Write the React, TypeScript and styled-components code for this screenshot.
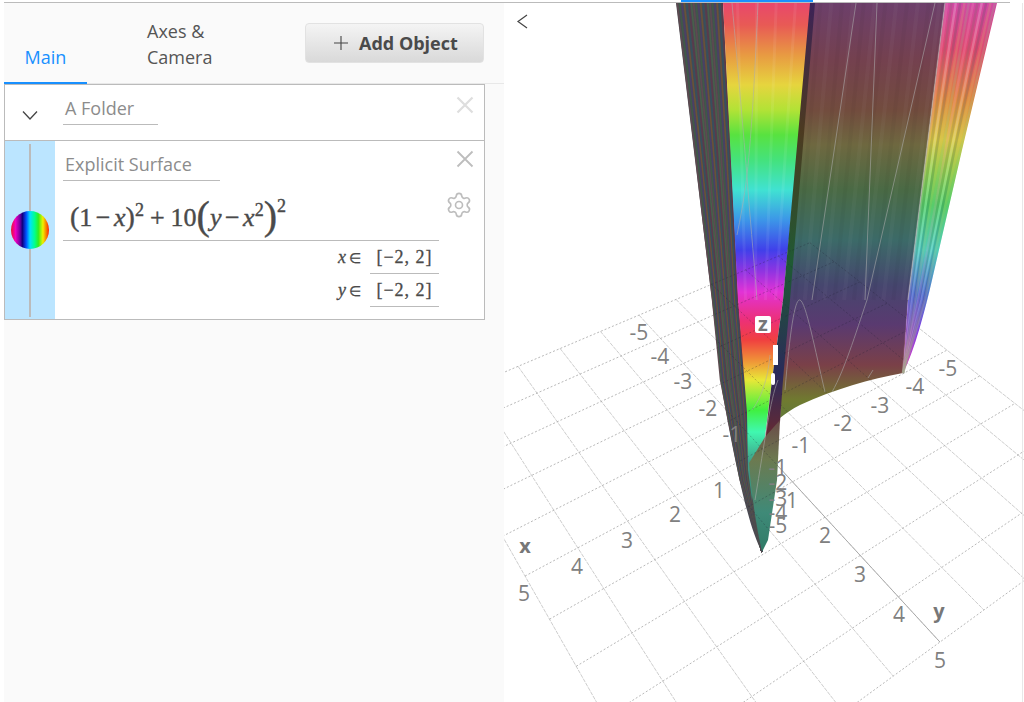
import React from 'react';
import styled, { createGlobalStyle } from 'styled-components';
import { Settings } from 'lucide-react';

const GlobalStyle = createGlobalStyle`
	html, body {
		margin: 0;
		padding: 0;
		background: #fff;
	}
	body {
		font-family: 'Open Sans', 'Noto Sans', sans-serif;
		overflow: hidden;
	}
`;

// rainbow of the height map, y is in page pixels
const bright: [number, string][] = [
	[0, '#e8456f'], [25, '#e85a55'], [55, '#e89a42'], [85, '#e6d53e'], [110, '#b2e236'], [135, '#58e240'],
	[160, '#44e27c'], [190, '#40e2d2'], [220, '#3c96e8'], [250, '#4040ea'], [270, '#8a34e2'], [292, '#e232d6'],
	[320, '#ec3078'], [340, '#f04040'], [360, '#f09038'], [380, '#e8e838'], [410, '#40f040'], [432, '#40f8b0'],
	[462, '#3f9c88'], [552, '#2f7a60'],
];
const dark: [number, string][] = [
	[0, '#6c3f6c'], [60, '#74414f'], [110, '#724c3e'], [145, '#6e6840'], [190, '#4a6a45'], [240, '#3c6a68'],
	[285, '#46466e'], [325, '#5a3a70'], [365, '#7a4048'], [400, '#707a30'], [430, '#5a7a40'],
];
const flank: [number, string][] = [
	[0, '#d048a8'], [50, '#e04a70'], [100, '#e08a40'], [140, '#d8c840'], [170, '#90d048'], [205, '#48d060'],
	[250, '#40d0c0'], [295, '#4060e0'], [335, '#8a3ae0'], [372, '#e838c0'],
];

const Stops = ({ list }: { list: [number, string][] }) => (
	<>
		{list.map(([y, c]) => (
			<stop key={y} offset={y / 560} stopColor={c} />
		))}
	</>
);

// plane z=0 as seen by the camera
const project = (x: number, y: number): [number, number] => {
	const d = 1 - 0.02493 * x - 0.03614 * y;
	return [(-60.54 * x + 1.56 * y + 762.3) / d, (11.05 * x + 15.4 * y + 449) / d];
};

const segment = (x1: number, y1: number, x2: number, y2: number) => {
	const [a, b] = project(x1, y1);
	const [c, e] = project(x2, y2);
	return `M${a.toFixed(1)} ${b.toFixed(1)}L${c.toFixed(1)} ${e.toFixed(1)}`;
};

const units = [-5, -4, -3, -2, -1, 0, 1, 2, 3, 4, 5];
const acrossPath = units.map((y) => segment(5, y, -5, y)).join('');
const alongPath = units.map((x) => segment(x, -5, x, 5)).join('');

const stripes = (left: [number, number][], right: [number, number][], n: number) =>
	Array.from({ length: n }, (_, i) => {
		const u = (i + 0.5) / n;
		return left.map(([x, y], k) => `${(x + (right[k][0] - x) * u).toFixed(1)},${y}`).join(' ');
	});

const sliverLeft: [number, number][] = [[676, 3], [694, 150], [712, 300], [720, 380], [740, 480], [762, 552]];
const sliverRight: [number, number][] = [[723, 3], [731, 150], [738, 300], [745, 380], [752, 480], [762, 552]];
const centerLeft: [number, number][] = [[723, 3], [738, 300]];
const centerRight: [number, number][] = [[810, 3], [783, 300]];
const panelLeft: [number, number][] = [[815, 3], [790, 300]];
const panelRight: [number, number][] = [[945, 3], [908, 300]];
const sideLeft: [number, number][] = [[945, 3], [926, 150], [908, 300], [903, 373]];
const sideRight: [number, number][] = [[997, 3], [962, 150], [927, 300], [903, 373]];
const sliverColors = ['#5e4a50', '#3f5a48', '#4a4068', '#6a5238', '#36505e', '#5a3a4c', '#48604a'];
const sideColors = ['#f6a0c0', '#6a6a60', '#ffffff', '#405060', '#d8c070', '#90c090'];

const SLIVER = 'M676 3L723 3L738 300L747 413L750 463L762 552C750 530 738 480 722 390L712 300Z';
const CENTER = 'M723 3L812 3L783 300L772 380L765 437L752 500L748 470L747 413L738 300Z';
const TIP = 'M749 463L765 437L780 420L777 480L768 540L762 552C757 530 752 500 749 463Z';
const PANEL = 'M813 3L945 3L908 300L903 373C870 379 835 389 800 405C792 409 786 413 780 418L785 300Z';
const SIDE = 'M945 3L997 3L962 150L932 280C925 310 915 350 903 373L908 300Z';
const SPINE = 'M810 3L815 3L790 300L783 380L780 422L765 440L772 380L783 300Z';

const SurfaceDrawing = () => (
	<g>
		<path d={SLIVER} fill="#4a4a52" />
		{stripes(sliverLeft, sliverRight, 20).map((p, i) => (
			<polyline key={i} points={p} fill="none" stroke={sliverColors[i % 7]} strokeWidth={1.6} />
		))}
		<path d={CENTER} fill="url(#brightRamp)" />
		{stripes(centerLeft, centerRight, 9).map((p, i) => (
			<polyline key={i} points={p} fill="none" stroke="#fff" strokeWidth={3} opacity={i % 2 ? 0.07 : 0} />
		))}
		<path d={PANEL} fill="url(#darkRamp)" />
		{stripes(panelLeft, panelRight, 12).map((p, i) => (
			<polyline key={i} points={p} fill="none" stroke={i % 2 ? '#fff' : '#000'} strokeWidth={4} opacity={0.03} />
		))}
		<path d={SIDE} fill="url(#flankRamp)" />
		{stripes(sideLeft, sideRight, 12).map((p, i) => (
			<polyline key={i} points={p} fill="none" stroke={sideColors[i % 6]} strokeWidth={2.5} opacity={0.22} />
		))}
		<path d={SPINE} fill="url(#spineRamp)" />
		<path d={TIP} fill="url(#tipRamp)" />
		<g clipPath="url(#surfaceClip)">
			<path d={alongPath + acrossPath} fill="none" stroke="#223" strokeWidth={0.7} strokeDasharray="2 2" opacity={0.4} />
		</g>
		<g fill="none" stroke="#b0b0b0" strokeWidth={1} opacity={0.55}>
			<path d="M732 3C738 70 745 150 748 190C751 230 755 270 757 300" />
			<path d="M758 3C755 70 752 130 747 175C744 200 740 220 737 235" />
			<path d="M856 3L812 300" />
			<path d="M877 3L865 300" />
			<path d="M935 3L867 300" />
			<path d="M945 3L908 300" strokeWidth={1.5} />
			<path d="M785 390C790 330 795 298 800 300C806 302 815 350 825 392" />
			<path d="M832 392C845 370 860 320 867 300" />
			<path d="M868 378L873 370" />
			<path d="M752 410C760 400 768 380 770 355" />
			<path d="M755 500C765 440 770 400 778 380" />
		</g>
	</g>
);

const axisTicks: [string, number, number][] = [
	['5', 524, 593], ['4', 577, 566], ['3', 627, 540], ['2', 675, 514], ['1', 719, 490],
	['-1', 801, 445], ['-2', 843, 423], ['-3', 880, 405], ['-4', 915, 386], ['-5', 948, 368],
	['-5', 639, 332], ['-4', 660, 356], ['-3', 683, 381], ['-2', 708, 408], ['-1', 732, 434],
	['1', 792, 500], ['2', 825, 535], ['3', 860, 574], ['4', 899, 614], ['5', 940, 660],
	['-1', 778, 467], ['-2', 778, 482], ['-3', 778, 498], ['-4', 778, 512], ['-5', 778, 525],
];

const Scene = () => (
	<Viewport viewBox="504 0 520 702">
		<defs>
			<linearGradient id="brightRamp" gradientUnits="userSpaceOnUse" x1="0" y1="0" x2="0" y2="560">
				<Stops list={bright} />
			</linearGradient>
			<linearGradient id="darkRamp" gradientUnits="userSpaceOnUse" x1="0" y1="0" x2="0" y2="560">
				<Stops list={dark} />
			</linearGradient>
			<linearGradient id="flankRamp" gradientUnits="userSpaceOnUse" x1="0" y1="0" x2="0" y2="560">
				<Stops list={flank} />
			</linearGradient>
			<linearGradient id="tipRamp" gradientUnits="userSpaceOnUse" x1="0" y1="420" x2="0" y2="552">
				<stop offset={0} stopColor="#6a4a48" />
				<stop offset={0.3} stopColor="#6c7a50" />
				<stop offset={0.7} stopColor="#3f8a78" />
				<stop offset={1} stopColor="#2f7a66" />
			</linearGradient>
			<linearGradient id="spineRamp" gradientUnits="userSpaceOnUse" x1="0" y1="0" x2="0" y2="440">
				<stop offset={0} stopColor="#3c2258" />
				<stop offset={0.3} stopColor="#4c3a20" />
				<stop offset={0.6} stopColor="#1f5a34" />
				<stop offset={0.85} stopColor="#2a2a5a" />
				<stop offset={1} stopColor="#6a2a30" />
			</linearGradient>
			<clipPath id="surfaceClip">
				<path d={SLIVER} />
				<path d={CENTER} />
				<path d={TIP} />
				<path d={PANEL} />
			</clipPath>
		</defs>

		<path d={alongPath} fill="none" stroke="#c0c0c0" strokeWidth={0.8} strokeDasharray="4 1" />
		<path d={acrossPath} fill="none" stroke="#a6a6a6" strokeWidth={0.8} strokeDasharray="2 2" />
		<path d={segment(0, 0, 0, 5)} fill="none" stroke="#a0a0a0" strokeWidth={0.8} />

		<SurfaceDrawing />

		{axisTicks.map(([t, x, y], i) => (
			<TickLabel key={i} x={x} y={y} textAnchor="middle" dominantBaseline="central">
				{t}
			</TickLabel>
		))}
		<AxisName x={525} y={545} textAnchor="middle" dominantBaseline="central">x</AxisName>
		<AxisName x={939} y={610} textAnchor="middle" dominantBaseline="central">y</AxisName>

		<rect x={755} y={316} width={16} height={17} rx={2} fill="#fff" />
		<AxisName x={763} y={323} textAnchor="middle" dominantBaseline="central">z</AxisName>
		<rect x={773} y={345} width={5} height={20} fill="#fff" />
		<rect x={771} y={373} width={4} height={12} rx={2} fill="#fff" />

		<path d="M527 15L518 21.5L527 28" fill="none" stroke="#444" strokeWidth={1.2} />
		<rect x={504} y={2} width={506} height={1} fill="#bbb" />
		<rect x={681} y={0} width={132} height={2} fill="#1890ff" />
		<rect x={1022} y={3} width={1} height={699} fill="#e8e8e8" />
	</Viewport>
);

const Cross = ({ shade, weight }: { shade: string; weight: number }) => (
	<svg width="18" height="18" viewBox="0 0 18 18">
		<path d="M1.5 1.5L16.5 16.5M16.5 1.5L1.5 16.5" stroke={shade} strokeWidth={weight} fill="none" />
	</svg>
);

const Chevron = () => (
	<svg width="16" height="10" viewBox="0 0 16 10">
		<path d="M1 1.5L8 9L15 1.5" stroke="#444" strokeWidth={1.3} fill="none" />
	</svg>
);

const Plus = () => (
	<svg width="14" height="14" viewBox="0 0 14 14">
		<path d="M7 0V14M0 7H14" stroke="#444" strokeWidth={1.1} fill="none" />
	</svg>
);

const App = () => (
	<Page>
		<GlobalStyle />
		<Panel>
			<TabBar>
				<Tab $active>Main</Tab>
				<Tab $narrow>Axes &amp; Camera</Tab>
				<AddButton>
					<Plus />
					<span>Add Object</span>
				</AddButton>
			</TabBar>
			<Card>
				<FolderToggle>
					<Chevron />
				</FolderToggle>
				<Content>
					<NameField $width={95}>A Folder</NameField>
				</Content>
				<Aside>
					<CloseSlot $top={11}>
						<Cross shade="#dedede" weight={2.2} />
					</CloseSlot>
				</Aside>
			</Card>
			<Card>
				<ColorBand>
					<Swatch />
				</ColorBand>
				<Content $padded>
					<NameField $width={157}>Explicit Surface</NameField>
					<MathField>
						<MathLine>
							<Paren>(</Paren>1<Op>−</Op><i>x</i><Paren>)</Paren><Sup>2</Sup><Op $wide>+</Op>10
							<BigParen>(</BigParen><i>y</i><Op>−</Op><i>x</i><Sup>2</Sup><BigParen>)</BigParen><Sup $high>2</Sup>
						</MathLine>
					</MathField>
					<RangeRow>
						<RangeLabel><i>x</i><Member>∈</Member></RangeLabel>
						<RangeValue>[−2, 2]</RangeValue>
					</RangeRow>
					<RangeRow>
						<RangeLabel><i>y</i><Member>∈</Member></RangeLabel>
						<RangeValue>[−2, 2]</RangeValue>
					</RangeRow>
				</Content>
				<Aside>
					<CloseSlot $top={9}>
						<Cross shade="#bdbdbd" weight={1.8} />
					</CloseSlot>
					<GearSlot>
						<Settings size={28} strokeWidth={1.4} color="#bdbdbd" />
					</GearSlot>
				</Aside>
			</Card>
		</Panel>
		<Scene />
	</Page>
);

export default App;

const Page = styled.div`
	display: flex;
	width: 1024px;
	height: 702px;
	overflow: hidden;
	background: #fff;
`;

const Panel = styled.div`
	flex: none;
	box-sizing: border-box;
	width: 500px;
	height: 700px;
	margin: 2px 0 0 4px;
	border-top: 1px solid #bbb;
	background: #fafafa;
`;

const TabBar = styled.div`
	display: flex;
	align-items: flex-end;
	height: 81px;
	border-bottom: 1px solid #e8e8e8;
	box-sizing: border-box;
`;

const Tab = styled.div<{ $active?: boolean; $narrow?: boolean }>`
	box-sizing: border-box;
	width: ${(p) => (p.$narrow ? '80px' : '83px')};
	margin-left: ${(p) => (p.$narrow ? '60px' : '0')};
	margin-bottom: -1px;
	padding-bottom: 12px;
	font-size: 18px;
	line-height: 26px;
	text-align: ${(p) => (p.$narrow ? 'left' : 'center')};
	color: ${(p) => (p.$active ? '#1890ff' : '#555')};
	border-bottom: 2px solid ${(p) => (p.$active ? '#1890ff' : 'transparent')};
`;

const AddButton = styled.div`
	display: flex;
	align-items: center;
	gap: 11px;
	box-sizing: border-box;
	width: 179px;
	height: 40px;
	margin: 0 20px 20px auto;
	padding-left: 28px;
	border: 1px solid #e2e2e2;
	border-radius: 4px;
	background: linear-gradient(#f4f4f4, #d9d9d9);
	font-size: 18px;
	font-weight: 700;
	color: #4a4a4a;
	white-space: nowrap;
`;

const Card = styled.div`
	position: relative;
	display: flex;
	box-sizing: border-box;
	width: 481px;
	margin-bottom: -1px;
	border: 1px solid #bbb;
	background: #fff;
`;

const FolderToggle = styled.div`
	display: flex;
	align-items: center;
	justify-content: center;
	flex: none;
	width: 50px;
	height: 55px;
	padding-top: 5px;
	box-sizing: border-box;
`;

const ColorBand = styled.div`
	position: relative;
	display: flex;
	align-items: center;
	justify-content: center;
	flex: none;
	width: 50px;
	background: #bbe5ff;
	&::before {
		content: '';
		position: absolute;
		top: 3px;
		bottom: 2px;
		left: 24px;
		width: 2px;
		background: #bbb;
	}
`;

const Swatch = styled.div`
	position: relative;
	width: 38px;
	height: 38px;
	border-radius: 50%;
	background: linear-gradient(
		90deg,
		#f01030 0%,
		#f000c0 12%,
		#7000a0 24%,
		#100080 30%,
		#0050ff 40%,
		#00e0ff 50%,
		#00ff90 62%,
		#30f020 72%,
		#f0f000 84%,
		#ff2000 100%
	);
`;

const Content = styled.div<{ $padded?: boolean }>`
	display: flex;
	flex-direction: column;
	flex: none;
	box-sizing: border-box;
	width: 384px;
	padding-left: 8px;
	padding-bottom: ${(p) => (p.$padded ? '12px' : '0')};
`;

const NameField = styled.div<{ $width: number }>`
	box-sizing: border-box;
	width: ${(p) => p.$width}px;
	height: 40px;
	padding: 9px 0 0 2px;
	border-bottom: 1px solid #bbb;
	font-size: 18px;
	line-height: 28px;
	color: #8c8c8c;
	white-space: nowrap;
`;

const MathField = styled.div`
	box-sizing: border-box;
	height: 60px;
	padding: 12px 0 0 7px;
	border-bottom: 1px solid #bbb;
`;

const MathLine = styled.div`
	font-family: 'Liberation Serif', serif;
	font-size: 26px;
	line-height: 48px;
	color: #4a4a4a;
	white-space: nowrap;
	-webkit-text-stroke: 0.4px #4a4a4a;
`;

const Paren = styled.span`
	font-size: 28px;
`;

const BigParen = styled.span`
	font-size: 40px;
	font-weight: 300;
	line-height: 1;
	vertical-align: -3px;
`;

const Op = styled.span<{ $wide?: boolean }>`
	margin: 0 ${(p) => (p.$wide ? '6px' : '3.5px')};
`;

const Sup = styled.span<{ $high?: boolean }>`
	font-size: 18px;
	line-height: 1;
	vertical-align: ${(p) => (p.$high ? '14px' : '10px')};
`;

const RangeRow = styled.div`
	display: flex;
	align-items: center;
	justify-content: flex-end;
	height: 33px;
	font-family: 'Liberation Serif', serif;
	font-size: 18px;
	color: #4a4a4a;
	-webkit-text-stroke: 0.3px #4a4a4a;
`;

const RangeLabel = styled.div`
	margin-right: 9px;
	white-space: nowrap;
`;

const Member = styled.span`
	margin-left: 3px;
	font-size: 14px;
`;

const RangeValue = styled.div`
	box-sizing: border-box;
	width: 69px;
	height: 33px;
	border-bottom: 1px solid #bbb;
	line-height: 32px;
	text-align: center;
	letter-spacing: 1px;
`;

const Aside = styled.div`
	position: relative;
	flex: 1;
	display: flex;
	flex-direction: column;
`;

const CloseSlot = styled.div<{ $top: number }>`
	display: flex;
	justify-content: flex-end;
	margin-top: ${(p) => p.$top}px;
	padding-right: 10px;
	height: 18px;
`;

const GearSlot = styled.div`
	display: flex;
	justify-content: center;
	margin-top: 23px;
	padding-right: 6px;
`;

const Viewport = styled.svg`
	flex: none;
	display: block;
	width: 520px;
	height: 702px;
`;

const TickLabel = styled.text`
	font-family: 'Open Sans', sans-serif;
	font-size: 21px;
	fill: #808080;
`;

const AxisName = styled.text`
	font-family: 'Open Sans', sans-serif;
	font-size: 20px;
	font-weight: 700;
	fill: #777;
`;
